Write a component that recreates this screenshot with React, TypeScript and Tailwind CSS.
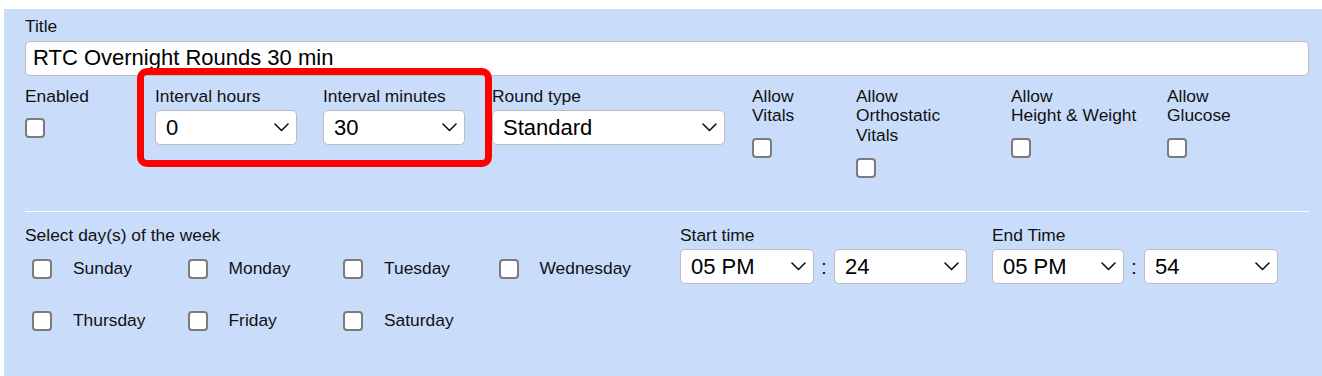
import React from 'react';

const Chevron = () => (
  <svg width="15" height="9" viewBox="0 0 15 9" fill="none" className="shrink-0">
    <polyline points="1,1 7.5,7.5 14,1" stroke="#111" strokeWidth="1.6" strokeLinecap="round" strokeLinejoin="round" />
  </svg>
);

function FakeSelect({ value, width }: { value: string; width: string }) {
  return (
    <div
      className={`${width} flex h-[35px] items-center justify-between rounded-[5px] border border-[#bcbcbc] bg-white pl-[10px] pr-[7px] text-[22px] leading-none text-black`}
    >
      <span>{value}</span>
      <Chevron />
    </div>
  );
}

const Checkbox = ({ className = '' }: { className?: string }) => (
  <span className={`block h-5 w-5 rounded-[4px] border-2 border-[#7b7b7b] bg-white ${className}`} />
);

const days = [
  'Sunday',
  'Monday',
  'Tuesday',
  'Wednesday',
  'Thursday',
  'Friday',
  'Saturday',
];

export default function App() {
  return (
    <div className="min-h-screen overflow-hidden bg-white font-['Liberation_Sans',Arial,sans-serif] text-[17.4px] leading-[19.5px] text-[#111]">
      <div className="relative ml-[4px] mt-[9px] h-[367px] bg-[#c9ddfb] pl-[21px] pt-[8px]">
        {/* Title */}
        <div>Title</div>
        <div className="mt-[4px] flex h-[35px] w-[1284px] items-center rounded-[5px] border border-[#bcbcbc] bg-white pl-[7px] text-[22px] text-black">
          RTC Overnight Rounds 30 min
        </div>

        {/* Options row */}
        <div className="mt-[11px] flex h-[124px] items-start">
          <div className="w-[130px]">
            <div>Enabled</div>
            <Checkbox className="mt-[12px]" />
          </div>
          <div className="w-[168px]">
            <div>Interval hours</div>
            <div className="mt-[4px]">
              <FakeSelect value="0" width="w-[142px]" />
            </div>
          </div>
          <div className="w-[169px]">
            <div>Interval minutes</div>
            <div className="mt-[4px]">
              <FakeSelect value="30" width="w-[142px]" />
            </div>
          </div>
          <div className="w-[260px]">
            <div>Round type</div>
            <div className="mt-[4px]">
              <FakeSelect value="Standard" width="w-[233px]" />
            </div>
          </div>
          <div className="w-[104px]">
            <div>
              Allow
              <br />
              Vitals
            </div>
            <Checkbox className="mt-[12.5px]" />
          </div>
          <div className="w-[155px]">
            <div>
              Allow
              <br />
              Orthostatic
              <br />
              Vitals
            </div>
            <Checkbox className="mt-[12.5px]" />
          </div>
          <div className="w-[156px]">
            <div>
              Allow
              <br />
              Height &amp; Weight
            </div>
            <Checkbox className="mt-[12.5px]" />
          </div>
          <div>
            <div>
              Allow
              <br />
              Glucose
            </div>
            <Checkbox className="mt-[12.5px]" />
          </div>
        </div>

        <div className="h-px w-[1284px] bg-white" />

        {/* Schedule */}
        <div className="mt-[14px] flex items-start">
          <div className="w-[655px]">
            <div>Select day(s) of the week</div>
            <div className="mt-[14px] grid grid-cols-[155.5px_155.5px_155.5px_155.5px] gap-y-[32px] pl-[7px]">
              {days.map((day) => (
                <div key={day} className="flex h-5 items-center">
                  <Checkbox />
                  <span className="ml-[21px]">{day}</span>
                </div>
              ))}
            </div>
          </div>
          <div className="w-[312px]">
            <div>Start time</div>
            <div className="mt-[4px] flex items-center">
              <FakeSelect value="05 PM" width="w-[134px]" />
              <span className="w-[20px] text-center text-[21px]">:</span>
              <FakeSelect value="24" width="w-[133px]" />
            </div>
          </div>
          <div>
            <div>End Time</div>
            <div className="mt-[4px] flex items-center">
              <FakeSelect value="05 PM" width="w-[132px]" />
              <span className="w-[20px] text-center text-[21px]">:</span>
              <FakeSelect value="54" width="w-[134px]" />
            </div>
          </div>
        </div>

        {/* annotation */}
        <div className="absolute left-[133px] top-[59px] h-[99px] w-[355px] rounded-[10px] border-[7px] border-[#ff0000]" />
      </div>
    </div>
  );
}
